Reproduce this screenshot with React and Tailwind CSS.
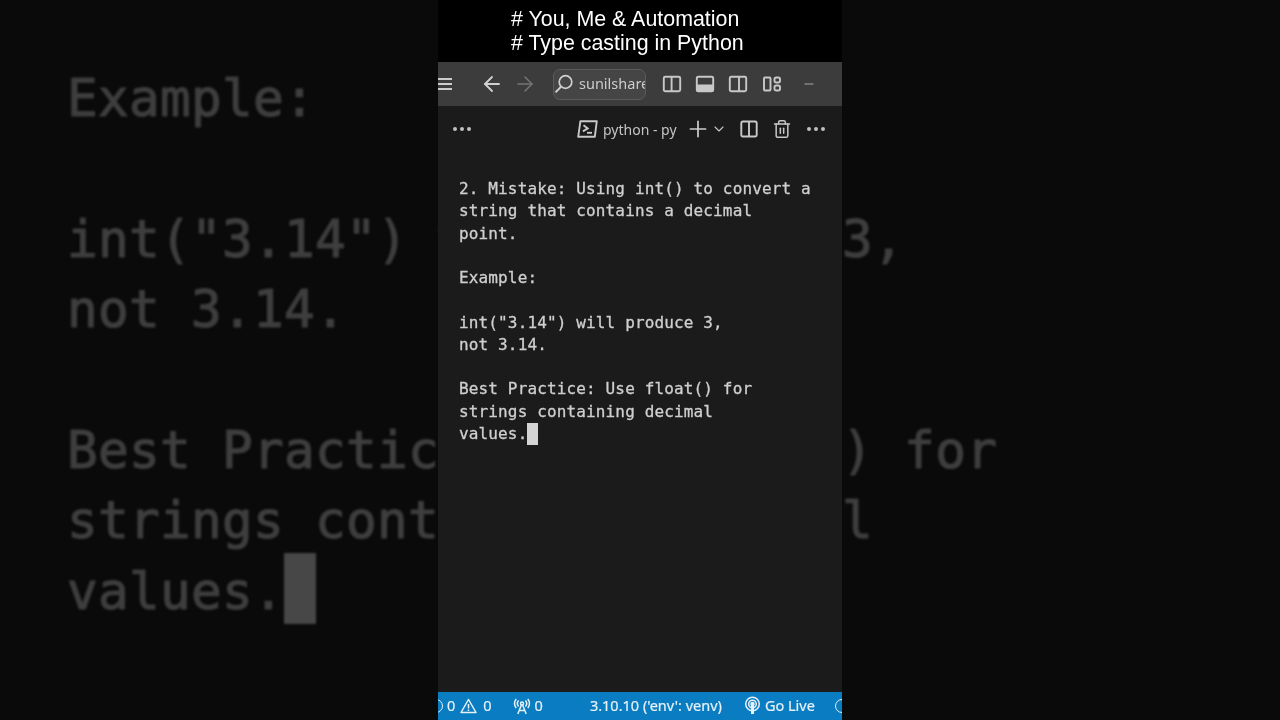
import React from "react";
import { ArrowLeft, ArrowRight, Plus, ChevronDown, Ellipsis, Trash2, Minus } from "lucide-react";

const MONO = "font-['DejaVu_Sans_Mono',monospace]";
const UI = "font-['Noto_Sans',sans-serif]";

const Outline = ({ children, w = 20, h = 20 }) => (
  <svg width={w} height={h} viewBox={`0 0 ${w} ${h}`} fill="none" stroke="currentColor" strokeWidth="1.9">
    {children}
  </svg>
);

const PanelLeft = () => (
  <Outline>
    <rect x="1.8" y="2.8" width="16.4" height="14.4" rx="1.5" />
    <path d="M9.6 3v14" />
  </Outline>
);

const PanelBottom = () => (
  <Outline>
    <rect x="1.8" y="2.8" width="16.4" height="14.4" rx="1.5" />
    <path d="M2 11.5h16v4.5a1 1 0 0 1-1 1H3a1 1 0 0 1-1-1z" fill="currentColor" />
  </Outline>
);

const PanelRight = () => (
  <Outline>
    <rect x="1.8" y="2.8" width="16.4" height="14.4" rx="1.5" />
    <path d="M11 3v14" />
  </Outline>
);

const CustomLayout = () => (
  <Outline w={18} h={20}>
    <rect x="1" y="3.5" width="6.5" height="13" rx="1" />
    <rect x="11.5" y="3.5" width="5.5" height="5" rx="1.8" />
    <rect x="11.5" y="11.5" width="5.5" height="5" rx="1.8" />
  </Outline>
);

const SearchIcon = () => (
  <svg width="20" height="20" viewBox="0 0 20 20" fill="none" stroke="currentColor" strokeWidth="1.7">
    <circle cx="11.5" cy="8" r="6.3" />
    <path d="M7 12.8 1.5 18.4" strokeWidth="2" />
  </svg>
);

const TerminalBox = () => (
  <svg width="21" height="20" viewBox="0 0 21 20" fill="none" stroke="currentColor" strokeWidth="1.9">
    <path d="M3.4 2.2h16.4l-2 15.6H1.2z" strokeLinejoin="round" />
    <path d="M6.5 6.3l4.2 3.1-4.8 3" />
    <path d="M10 13.8h5" />
  </svg>
);

const Split = () => (
  <Outline w={18} h={18}>
    <rect x="1.3" y="1.5" width="15.4" height="15" rx="1.4" />
    <path d="M9 2v14" />
  </Outline>
);

const WarningIcon = () => (
  <svg width="17" height="16" viewBox="0 0 17 16" fill="none" stroke="currentColor" strokeWidth="1.5">
    <path d="M8.5 1.5 16 14.5H1z" strokeLinejoin="round" />
    <path d="M8.5 6v4.5M8.5 11.4v1.5" />
  </svg>
);

const RadioIcon = () => (
  <svg width="18" height="17" viewBox="0 0 18 17" fill="none" stroke="currentColor" strokeWidth="1.5">
    <circle cx="9" cy="5.5" r="1.5" />
    <path d="M8.4 7 4.8 16M9.6 7l3.6 9M6.2 12.5h5.6" />
    <path d="M5.6 8.5a4.5 4.5 0 0 1 0-6M12.4 8.5a4.5 4.5 0 0 0 0-6M3.2 10a7.5 7.5 0 0 1 0-9M14.8 10a7.5 7.5 0 0 0 0-9" />
  </svg>
);

const BroadcastIcon = () => (
  <svg width="17" height="20" viewBox="0 0 17 20" fill="none" stroke="currentColor" strokeWidth="1.5">
    <circle cx="8.5" cy="8" r="6.8" />
    <circle cx="8.5" cy="8" r="3.8" />
    <circle cx="8.5" cy="8" r="1.5" fill="currentColor" />
    <path d="M8.5 10v8" strokeWidth="3" />
  </svg>
);

const Backdrop = () => (
  <div className={`col-start-1 row-start-1 h-[720px] bg-[#0a0a0a] pt-[64px] pl-[67px] overflow-hidden ${MONO}`}>
    <div className="text-[51px] leading-[70.4px] tracking-[0.3px] whitespace-pre text-[#3e3e3e] [-webkit-text-stroke:1.2px_#3e3e3e] blur-[0.8px]">
      <div>Example:</div>
      <div>&nbsp;</div>
      <div>int("3.14") will produce 3,</div>
      <div>not 3.14.</div>
      <div>&nbsp;</div>
      <div>Best Practice: Use float() for</div>
      <div>strings containing decimal</div>
      <div className="flex items-center h-[70.4px]">
        values.
        <span className="w-[32px] h-[71px] mb-[7px] bg-[#474747]"></span>
      </div>
    </div>
  </div>
);

const TitleBar = () => (
  <div className="h-[44px] bg-[#3c3c3c] flex items-center text-[#cccccc] overflow-hidden shrink-0">
    <div className="w-[14px] flex flex-col gap-[3px]">
      <span className="h-[2px] bg-[#cccccc]"></span>
      <span className="h-[2px] bg-[#cccccc]"></span>
      <span className="h-[2px] bg-[#cccccc]"></span>
    </div>
    <ArrowLeft size={24} strokeWidth={1.8} className="ml-[28px] text-[#d0d0d0]" />
    <ArrowRight size={24} strokeWidth={1.5} className="ml-[9px] text-[#747474]" />
    <div className="ml-[16px] w-[93px] h-[31px] rounded-[7px] border border-[#5a5a5a] bg-[#454545] flex items-center overflow-hidden">
      <span className="shrink-0 text-[#cfcfcf]"><SearchIcon /></span>
      <span className={`ml-[5px] text-[14.5px] text-[#cccccc] whitespace-nowrap ${UI}`}>sunilshare</span>
    </div>
    <div className="ml-[16px] flex items-center text-[#c8c8c8]">
      <PanelLeft />
      <span className="ml-[13px]"><PanelBottom /></span>
      <span className="ml-[13px]"><PanelRight /></span>
      <span className="ml-[15px]"><CustomLayout /></span>
      <Minus size={14} strokeWidth={1.5} className="ml-[21px] text-[#b8b8b8]" />
    </div>
  </div>
);

const TerminalBar = () => (
  <div className="h-[44px] pt-[2px] flex items-center text-[#c8c8c8] shrink-0">
    <Ellipsis size={24} strokeWidth={2} className="ml-[12px] text-[#c0c0c0]" />
    <span className="ml-[103px]"><TerminalBox /></span>
    <span className={`ml-[5px] text-[14px] whitespace-nowrap text-[#c4c4c4] ${UI}`}>python - py</span>
    <Plus size={26} strokeWidth={1.6} className="ml-[8px] text-[#cccccc]" />
    <ChevronDown size={16} strokeWidth={1.6} />
    <span className="ml-[13px]"><Split /></span>
    <Trash2 size={20} strokeWidth={1.8} className="ml-[14px]" />
    <Ellipsis size={24} strokeWidth={2} className="ml-[12px] text-[#c0c0c0]" />
  </div>
);

const TerminalOutput = () => (
  <div className={`flex-1 pl-[21px] pt-[28px] text-[16px] leading-[22.25px] tracking-[0.14px] text-[#cfcfcf] [-webkit-text-stroke:0.3px_#cfcfcf] whitespace-pre ${MONO}`}>
    <div>2. Mistake: Using int() to convert a</div>
    <div>string that contains a decimal</div>
    <div>point.</div>
    <div>&nbsp;</div>
    <div>Example:</div>
    <div>&nbsp;</div>
    <div>int("3.14") will produce 3,</div>
    <div>not 3.14.</div>
    <div>&nbsp;</div>
    <div>Best Practice: Use float() for</div>
    <div>strings containing decimal</div>
    <div className="flex items-center">
      values.
      <span className="w-[11px] h-[22px] bg-[#d4d4d4]"></span>
    </div>
  </div>
);

const StatusBar = () => (
  <div className={`h-[28px] bg-[#0a7cc1] flex items-center text-[14.5px] text-[#e6f1f8] [-webkit-text-stroke:0.2px_#e6f1f8] overflow-hidden shrink-0 whitespace-nowrap ${UI}`}>
    <span className="w-[14px] h-[14px] rounded-full border border-[#e6f1f8] ml-[-9px] shrink-0"></span>
    <span className="ml-[4px]">0</span>
    <span className="ml-[5px]"><WarningIcon /></span>
    <span className="ml-[6px]">0</span>
    <span className="ml-[21px]"><RadioIcon /></span>
    <span className="ml-[4px]">0</span>
    <span className="ml-[47px]">3.10.10 ('env': venv)</span>
    <span className="ml-[22px]"><BroadcastIcon /></span>
    <span className="ml-[4px]">Go Live</span>
    <span className="w-[14px] h-[14px] rounded-full border border-[#e6f1f8] ml-[20px] shrink-0"></span>
  </div>
);

export default function App() {
  return (
    <div className="grid h-[720px] w-[1280px] overflow-hidden bg-[#0a0a0a]">
      <Backdrop />

      <div className="col-start-1 row-start-1 relative z-10 justify-self-center w-[404px] h-[720px] flex flex-col bg-[#1b1b1b] blur-[0.3px]">
        {/* caption */}
        <div className="h-[62px] bg-black text-white font-['Liberation_Sans',sans-serif] text-[21.4px] leading-[24px] pl-[73px] pt-[7px] shrink-0">
          <div># You, Me &amp; Automation</div>
          <div># Type casting in Python</div>
        </div>
        <TitleBar />
        <TerminalBar />
        <TerminalOutput />
        <StatusBar />
      </div>
    </div>
  );
}
